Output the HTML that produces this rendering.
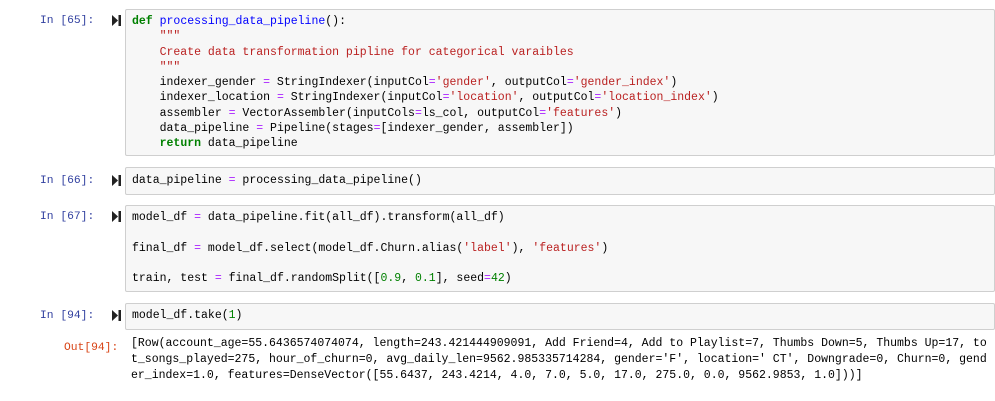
<!DOCTYPE html>
<html><head><style>
body{margin:0;width:995px;height:401px;background:#fff;position:relative;overflow:hidden;font-family:"Liberation Mono",monospace;font-size:11.5px;}
.p{position:absolute;left:40px;color:#303f9f;line-height:15.25px;white-space:pre;font-size:11.3px}
.o{color:#d84315;left:34px}
.ic{position:absolute;left:112px;width:9px;height:11px;}
.c{position:absolute;left:125px;width:868px;background:#f7f7f7;border:1px solid #cfcfcf;border-radius:2px;}
.t{position:absolute;left:132px;white-space:pre;line-height:15.25px;color:#000;}
.k{color:#008000;font-weight:bold}.f{color:#0000ff}.s{color:#ba2121}.op{color:#aa22ff}.n{color:#008000}
</style></head><body>
<div class="c" style="top:9px;height:145px"></div>
<div class="c" style="top:167px;height:26px"></div>
<div class="c" style="top:205px;height:85px"></div>
<div class="c" style="top:303px;height:25px"></div>

<div class="p" style="top:14px">In [65]:</div>
<div class="p" style="top:174px">In [66]:</div>
<div class="p" style="top:210px">In [67]:</div>
<div class="p" style="top:309px">In [94]:</div>
<div class="p o" style="top:341px;left:64px">Out[94]:</div>

<svg class="ic" style="top:15px" viewBox="0 0 9 11"><path d="M0 0L6 5.5L0 11Z" fill="#222"/><rect x="6.5" y="0" width="2.5" height="11" fill="#222"/></svg>
<svg class="ic" style="top:175px" viewBox="0 0 9 11"><path d="M0 0L6 5.5L0 11Z" fill="#222"/><rect x="6.5" y="0" width="2.5" height="11" fill="#222"/></svg>
<svg class="ic" style="top:211px" viewBox="0 0 9 11"><path d="M0 0L6 5.5L0 11Z" fill="#222"/><rect x="6.5" y="0" width="2.5" height="11" fill="#222"/></svg>
<svg class="ic" style="top:310px" viewBox="0 0 9 11"><path d="M0 0L6 5.5L0 11Z" fill="#222"/><rect x="6.5" y="0" width="2.5" height="11" fill="#222"/></svg>

<div class="t" style="top:14px"><span class="k">def</span> <span class="f">processing_data_pipeline</span>():
    <span class="s">"""</span>
<span class="s">    Create data transformation pipline for categorical varaibles</span>
<span class="s">    """</span>
    indexer_gender <span class="op">=</span> StringIndexer(inputCol<span class="op">=</span><span class="s">'gender'</span>, outputCol<span class="op">=</span><span class="s">'gender_index'</span>)
    indexer_location <span class="op">=</span> StringIndexer(inputCol<span class="op">=</span><span class="s">'location'</span>, outputCol<span class="op">=</span><span class="s">'location_index'</span>)
    assembler <span class="op">=</span> VectorAssembler(inputCols<span class="op">=</span>ls_col, outputCol<span class="op">=</span><span class="s">'features'</span>)
    data_pipeline <span class="op">=</span> Pipeline(stages<span class="op">=</span>[indexer_gender, assembler])
    <span class="k">return</span> data_pipeline</div>

<div class="t" style="top:173px">data_pipeline <span class="op">=</span> processing_data_pipeline()</div>

<div class="t" style="top:210px">model_df <span class="op">=</span> data_pipeline.fit(all_df).transform(all_df)

final_df <span class="op">=</span> model_df.select(model_df.Churn.alias(<span class="s">'label'</span>), <span class="s">'features'</span>)

train, test <span class="op">=</span> final_df.randomSplit([<span class="n">0.9</span>, <span class="n">0.1</span>], seed<span class="op">=</span><span class="n">42</span>)</div>

<div class="t" style="top:308px">model_df.take(<span class="n">1</span>)</div>

<div class="t" style="top:336px;left:131px;line-height:16px">[Row(account_age=55.6436574074074, length=243.421444909091, Add Friend=4, Add to Playlist=7, Thumbs Down=5, Thumbs Up=17, to
t_songs_played=275, hour_of_churn=0, avg_daily_len=9562.985335714284, gender='F', location=' CT', Downgrade=0, Churn=0, gend
er_index=1.0, features=DenseVector([55.6437, 243.4214, 4.0, 7.0, 5.0, 17.0, 275.0, 0.0, 9562.9853, 1.0]))]</div>
</body></html>
